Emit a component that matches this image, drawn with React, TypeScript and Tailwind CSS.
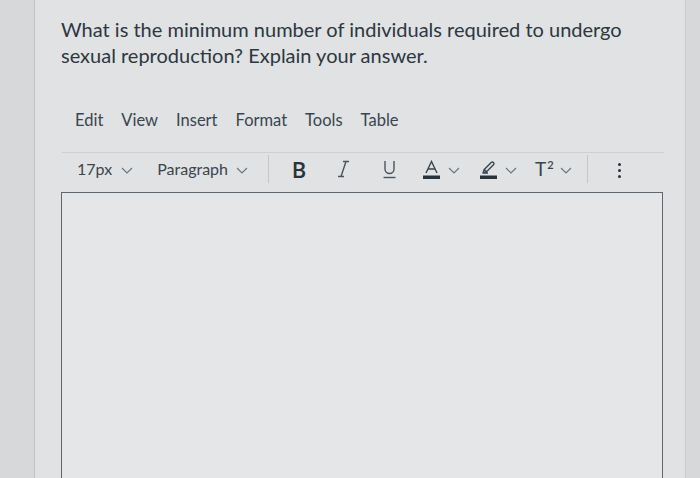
import React from "react";

const Chev = ({ className }: { className: string }) => (
  <svg width="12" height="7" viewBox="0 0 12 7" className={className}>
    <path d="M1 1l5 5 5-5" fill="none" stroke="#6b7780" strokeWidth="1.2" />
  </svg>
);

export default function App() {
  return (
    <div
      className="w-[700px] h-[478px] overflow-hidden bg-[#d6d8da] flex"
      style={{ fontFamily: "Lato, 'Open Sans', sans-serif" }}
    >
      <div className="w-[35px] shrink-0 border-r border-[#bfc2c5]" />
      <div className="w-[651px] shrink-0 bg-[#e0e2e4] border-r border-[#c8cbce] flex flex-col">
        <div className="pl-[26px] pt-[16px] text-[20px] leading-[26px] text-[#2d3740]">
          <p>What is the minimum number of individuals required to undergo</p>
          <p>sexual reproduction? Explain your answer.</p>
        </div>
        <div className="ml-[27px] mr-[21px] mt-[37px] flex flex-col">
          <div className="flex items-start gap-[18px] pl-[13px] pt-[3px] h-[48px] text-[16.5px] leading-[24px] text-[#3a454e] border-b border-[#cdd0d3]">
            <span>Edit</span>
            <span>View</span>
            <span>Insert</span>
            <span>Format</span>
            <span>Tools</span>
            <span>Table</span>
          </div>
          <div className="flex items-center h-[32px] pl-[15px] text-[16px] text-[#3a454e]">
            <span className="flex items-center">17px<Chev className="ml-[9px] mt-[2px]" /></span>
            <span className="flex items-center ml-[24px]">Paragraph<Chev className="ml-[8px] mt-[2px]" /></span>
            <div className="w-px h-[28px] bg-[#c4c7ca] ml-[20px]" />
            <span
              className="ml-[23px] w-[14px] flex justify-center text-[22px] leading-[24px] font-semibold text-[#2a333b]"
              style={{ fontFamily: "'Open Sans', sans-serif" }}
            >
              B
            </span>
            <span className="ml-[31px] w-[13px] flex justify-center">
              <svg width="13" height="18" viewBox="0 0 13 18">
                <path d="M6 1.5h6M1 16.5h6M9 1.5L4 16.5" fill="none" stroke="#4a555e" strokeWidth="1.4" />
              </svg>
            </span>
            <span className="ml-[33px] w-[13px] flex justify-center">
              <svg width="13" height="19" viewBox="0 0 13 19">
                <path d="M2 1v8a4.5 4.5 0 0 0 9 0V1" fill="none" stroke="#4a555e" strokeWidth="1.4" />
                <path d="M0.5 17.5h12" stroke="#4a555e" strokeWidth="1.4" />
              </svg>
            </span>
            <span className="ml-[27px] flex items-center">
              <svg width="17" height="19" viewBox="0 0 17 19">
                <path d="M3 13L8.5 1.5 14 13M5 9h7" fill="none" stroke="#3a454e" strokeWidth="1.4" />
                <rect x="0" y="15.5" width="17" height="3.5" fill="#2a333b" />
              </svg>
              <Chev className="ml-[8px] mt-[2px]" />
            </span>
            <span className="ml-[20px] flex items-center">
              <svg width="17" height="19" viewBox="0 0 17 19">
                <path d="M3 13l1.2-3.5 7-7a1.6 1.6 0 0 1 2.3 2.3l-7 7z M4.2 9.5l2.3 2.3 M3 13h5" fill="none" stroke="#3a454e" strokeWidth="1.4" strokeLinejoin="round" />
                <rect x="0" y="15.5" width="17" height="3.5" fill="#2a333b" />
              </svg>
              <Chev className="ml-[8px] mt-[2px]" />
            </span>
            <span className="ml-[18px] flex items-center">
              <span className="w-[20px] flex items-start text-[#3a454e]">
                <span className="text-[19px] leading-[20px]">T</span>
                <span className="text-[11px] leading-[11px] font-semibold ml-[1px]">2</span>
              </span>
              <Chev className="ml-[5px] mt-[2px]" />
            </span>
            <div className="w-px h-[28px] bg-[#c4c7ca] ml-[15px]" />
            <span className="ml-[30px] flex flex-col gap-[3px] mt-[2px]">
              <span className="w-[3px] h-[3px] rounded-full bg-[#2a333b]" />
              <span className="w-[3px] h-[3px] rounded-full bg-[#2a333b]" />
              <span className="w-[3px] h-[3px] rounded-full bg-[#2a333b]" />
            </span>
          </div>
          <div className="mt-[7px] -ml-px w-[602px] h-[300px] border-[1.5px] border-[#5f666c] bg-[#e4e6e8]" />
        </div>
      </div>
      <div className="flex-1" />
    </div>
  );
}
